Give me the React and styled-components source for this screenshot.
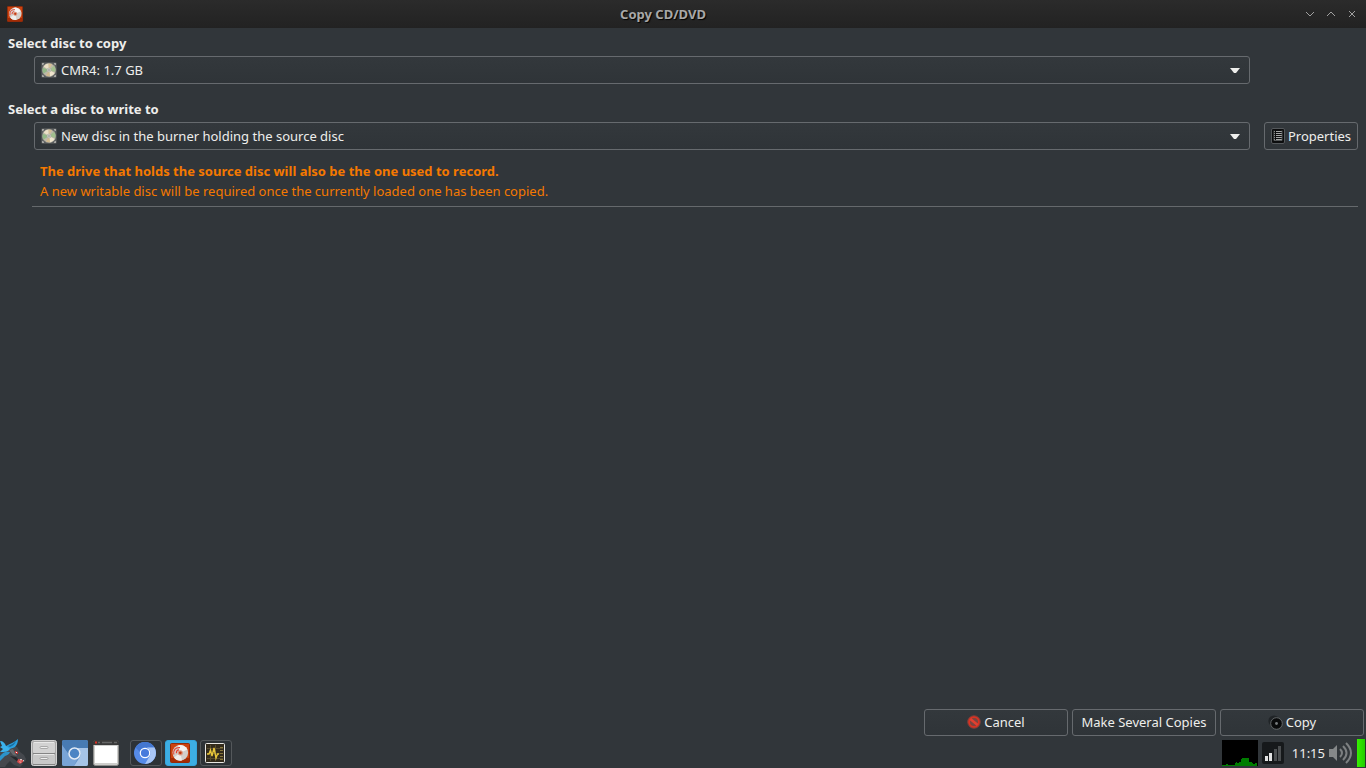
import React from "react";
import styled, { createGlobalStyle } from "styled-components";

const Global = createGlobalStyle`
  *, *::before, *::after { box-sizing: border-box; }
  body { margin: 0; background: #31363a; }
  body, button, select {
    font-family: "Noto Sans", "Open Sans", sans-serif;
    font-size: 13px;
    line-height: 20px;
    color: #eeeeec;
  }
`;

const Desktop = styled.div`
  display: flex;
  flex-direction: column;
  min-height: 100vh;
`;

const TitleBar = styled.header`
  display: grid;
  grid-template-columns: 1fr auto 1fr;
  align-items: center;
  height: 28px;
  padding: 0 9px 0 7px;
  background: linear-gradient(#2b2b2b, #222222);
`;

const Title = styled.h1`
  margin: 0;
  padding-right: 38px;
  font-size: 13px;
  line-height: 20px;
  font-weight: 700;
  color: #a8a8a8;
  text-shadow: 1px 1px 1px #000000;
`;

const WindowControls = styled.div`
  display: flex;
  justify-content: flex-end;
  gap: 11px;
`;

const WindowButton = styled.button`
  display: flex;
  align-items: center;
  justify-content: center;
  width: 10px;
  height: 20px;
  padding: 0;
  border: 0;
  background: none;
`;

const Content = styled.main`
  flex: 1;
  display: flex;
  flex-direction: column;
  gap: 15px;
  padding: 5px 8px 0;
`;

const Section = styled.section`
  display: flex;
  flex-direction: column;
  gap: 3px;
`;

const Heading = styled.label`
  font-weight: 700;
`;

const DriveRow = styled.div`
  display: grid;
  grid-template-columns: minmax(0, 1fr) 94px;
  gap: 14px;
  padding-left: 26px;
`;

const ComboBox = styled.div`
  display: grid;
  align-items: center;
  height: 28px;

  > * { grid-area: 1 / 1; }
`;

const Select = styled.select`
  appearance: none;
  width: 100%;
  height: 28px;
  padding: 0 32px 0 26px;
  border: 1px solid #666a6e;
  border-radius: 3px;
  background: linear-gradient(#33383c, #2f3438);
`;

const ComboIcon = styled.span`
  display: flex;
  z-index: 1;
  margin-left: 7px;
  pointer-events: none;
`;

const Caret = styled.svg`
  z-index: 1;
  justify-self: end;
  margin-right: 10px;
  pointer-events: none;
`;

const Warning = styled.div`
  margin: 8px 0 0 24px;
  padding: 0 8px 5px;
  border-bottom: 1px solid #65696c;
  color: #f57900;

  p { margin: 0; }
`;

const Button = styled.button`
  display: flex;
  align-items: center;
  justify-content: center;
  gap: 3px;
  height: ${(p) => (p.$tall ? 28 : 27)}px;
  padding: 0 0 ${(p) => (p.$tall ? 0 : 1)}px;
  border: 1px solid #666a6e;
  border-radius: 3px;
  background: linear-gradient(#33383c, #2f3438);
  white-space: nowrap;
`;

const Actions = styled.footer`
  display: grid;
  grid-template-columns: repeat(3, 144px);
  justify-content: end;
  gap: 4px;
  padding: 0 2px 2px;
`;

const Taskbar = styled.nav`
  display: flex;
  align-items: center;
  justify-content: space-between;
  height: 30px;
`;

const Group = styled.div`
  display: flex;
  align-items: center;
  gap: ${(p) => p.$gap}px;
`;

const Launcher = styled.button`
  display: flex;
  padding: 0;
  border: 0;
  background: none;
`;

const TaskButton = styled.button`
  display: flex;
  align-items: center;
  justify-content: center;
  width: 32px;
  height: 26px;
  padding: 0 2px 0 0;
  border: 1px solid ${(p) => (p.$active ? "#35a5dc" : "#54585b")};
  border-radius: 3px;
  background: ${(p) => (p.$active ? "#3daee3" : "#2d3236")};
`;

const Clock = styled.time`
  padding-left: 4px;
`;

const Battery = styled.div`
  width: 9px;
  height: 28px;
  border-right: 1px solid #26352a;
  background: linear-gradient(90deg, #35f000, #22cc00);
`;

function BurnerIcon({ size }) {
  return (
    <svg width={size} height={size} viewBox="0 0 20 20" aria-hidden="true">
      <rect x=".5" y=".5" width="19" height="19" rx="1" fill="#cc4310" stroke="#962b08" />
      <path d="M1 15h18v4H1z" fill="#a42c05" />
      <circle cx="10.3" cy="9.8" r="7.8" fill="#d3cfcb" />
      <path d="M10.3 9.8 8 2.4a7.8 7.8 0 0 1 9.5 4.2z" fill="#f5f3f2" />
      <path d="M10.3 9.8 12 17.4A7.8 7.8 0 0 1 4 14.4z" fill="#efedeb" />
      <path d="M3.8 11.5C3 7 5.6 4.2 10 4.6M6.4 10.2C6.2 8 7.4 7 9 6.9" fill="none" stroke="#e8402f" strokeWidth="1.2" />
      <circle cx="10.3" cy="9.8" r="2.6" fill="#dc9a84" />
      <circle cx="10.3" cy="9.8" r="1.4" fill="#c43b11" />
    </svg>
  );
}

function DiscIcon() {
  return (
    <svg width="16" height="16" viewBox="0 0 16 16" aria-hidden="true">
      <rect x=".5" y=".5" width="15" height="15" rx="1" fill="#5c5f60" stroke="#4b4f51" />
      <path d="M1 1h2v1L2 3H1zM15 1v2h-1l-1-1V1zM1 15v-2h1l1 1v1zM15 15h-2v-1l1-1h1z" fill="#a5a6a3" />
      <circle cx="8" cy="8" r="6.7" fill="#bdb8a8" stroke="#8c8d87" strokeWidth=".5" />
      <path d="M8 8 2.6 4.4A6.5 6.5 0 0 1 7.5 1.5z" fill="#e9dfc6" />
      <path d="M8 8 2.6 11.6A6.5 6.5 0 0 1 2 5.7z" fill="#92b886" />
      <path d="M8 8 7.5 1.5A6.5 6.5 0 0 1 11 2.3z" fill="#d6bf96" />
      <path d="M8 8l5-4.2a6.5 6.5 0 0 1 1.1 6.2z" fill="#a1bf8d" />
      <path d="M8 8l5.8 3a6.5 6.5 0 0 1-4.8 3.4z" fill="#eee5cd" />
      <path d="M8 8 5 13.8 9 14.4z" fill="#d0b98e" />
      <circle cx="8" cy="8" r="2" fill="#d5d5cd" stroke="#a3a49e" strokeWidth=".6" />
      <circle cx="8" cy="8" r=".8" fill="#858782" />
    </svg>
  );
}

function Combo({ id, text }) {
  return (
    <ComboBox>
      <Select id={id}>
        <option>{text}</option>
      </Select>
      <ComboIcon><DiscIcon /></ComboIcon>
      <Caret width="10" height="5" viewBox="0 0 10 5" aria-hidden="true">
        <path d="M0 0h10L6 5H4z" fill="#eeeeec" />
      </Caret>
    </ComboBox>
  );
}

function PropertiesIcon() {
  return (
    <svg width="14" height="16" viewBox="0 0 14 16" aria-hidden="true">
      <rect x=".5" y=".5" width="13" height="15" rx="1.5" fill="#0c0d0e" stroke="#54585b" />
      <path d="M3 3.5h1M5 3.5h6M3 5.5h1M5 5.5h6M3 7.5h1M5 7.5h6M3 9.5h1M5 9.5h6M3 11.5h1M5 11.5h6" stroke="#a5a6a6" />
      <path d="M3 2.5v10h8v-10" fill="none" stroke="#66696b" strokeWidth=".8" />
    </svg>
  );
}

function CancelIcon() {
  return (
    <svg width="14" height="14" viewBox="0 0 14 14" aria-hidden="true">
      <circle cx="7" cy="7" r="6.3" fill="#d83222" stroke="#75403d" />
      <circle cx="7" cy="7" r="4" fill="#7a4440" />
      <path d="m3.4 4 7.2 6" stroke="#e24030" strokeWidth="2.6" />
    </svg>
  );
}

function CopyIcon() {
  return (
    <svg width="15" height="15" viewBox="0 0 15 15" aria-hidden="true">
      <circle cx="6" cy="6" r="5.6" fill="#202427" />
      <circle cx="8.5" cy="8.5" r="5.8" fill="#090a0b" stroke="#6b6f71" strokeWidth=".9" />
      <circle cx="8.5" cy="8.5" r="1.4" fill="#777b7e" />
    </svg>
  );
}

function DragonIcon() {
  return (
    <svg width="26" height="28" viewBox="0 0 26 28" aria-hidden="true">
      <path d="M0 12 6 9l7-2 4 1 3 5 4 3 2 4-1 3-6-1 4 3-3 3-6-2-4-4-3 3-2 3H0z" fill="#45484d" />
      <path d="M5 8C8 5 12 5 18 0c0 3-1 6-3 8-3 2-6 1-8 4z" fill="#2b9fdd" />
      <path d="M0 2c3 0 5 2 6 5l4 3c-2 3-5 3-10 3l3-3-3-2 2-1z" fill="#3bb2ec" />
      <path d="M0 17c3-4 6-5 10-4-1 3-3 3-5 4l-5 5z" fill="#2c94cb" />
      <path d="M8 7c3-1 5-2 8-5-1 3-3 5-6 6z" fill="#1a6c9c" />
      <path d="m9 11 4-1 2 4 2 3-4-1z" fill="#66696d" />
      <path d="m15 12 3 1v2l-3-1z" fill="#dd3535" />
      <path d="m16 13 1 1" stroke="#ffffff" />
      <path d="m10 17 6 1 3 3-1 2z" fill="#25282c" />
      <path d="m18 20 5 1v2l-3 2-3-2z" fill="#d04a4b" />
      <path d="m19 22 3 1-2 1z" fill="#f4a09a" />
      <path d="m20 20 1 2 1-2zM23 21l1 2v-2z" fill="#f4eee9" />
    </svg>
  );
}

function CabinetIcon() {
  return (
    <svg width="26" height="26" viewBox="0 0 26 26" aria-hidden="true">
      <rect x=".5" y=".5" width="25" height="25" rx="2" fill="#a9a9a9" stroke="#d2d2d2" />
      <rect x="2" y="2" width="22" height="11" rx="1" fill="#d2d2d2" />
      <rect x="2" y="14" width="22" height="10" rx="1" fill="#c8c8c8" />
      <path d="M3 2.5h20M3 14.5h20" stroke="#e8e8e8" />
      <path d="M2 13.5h22M2 24.5h22" stroke="#858585" />
      <rect x="9" y="6.5" width="8" height="2" rx="1" fill="#eeeeee" stroke="#a9a9a9" />
      <rect x="9" y="17.5" width="8" height="2" rx="1" fill="#eeeeee" stroke="#a3a3a3" />
    </svg>
  );
}

function BrowserSquareIcon() {
  return (
    <svg width="26" height="26" viewBox="0 0 26 26" aria-hidden="true">
      <rect width="26" height="26" rx="2" fill="#6695cb" />
      <path d="M0 2q0-2 2-2h22q2 0 2 2v6H13q-5 1-6 7L0 5z" fill="#487bb3" />
      <path d="M0 5 8 16q2 3 7 3l-3 7H2q-2 0-2-2z" fill="#79a4d6" />
      <path d="M26 8H14q6 3 4 9l-6 9h12q2 0 2-2z" fill="#a6c4e7" />
      <circle cx="12.5" cy="13.5" r="6.2" fill="#e3ebf5" />
      <circle cx="12.5" cy="13.5" r="4.7" fill="#4b84c4" />
    </svg>
  );
}

function WindowIcon() {
  return (
    <svg width="26" height="26" viewBox="0 0 26 26" aria-hidden="true">
      <rect x=".5" y=".5" width="25" height="25" rx="2" fill="#cfcfcd" stroke="#8e8e8c" />
      <path d="M0 5V2q0-2 2-2h22q2 0 2 2v3z" fill="#393939" />
      <path d="M2 2.5h2" stroke="#e33124" strokeWidth="2" />
      <path d="M5 2.5h2M9 2.5h10M21 2.5h3" stroke="#666666" strokeWidth="1.5" />
      <path d="M2 6h22v17H2z" fill="#ffffff" />
    </svg>
  );
}

function BrowserRoundIcon() {
  return (
    <svg width="22" height="22" viewBox="0 0 22 22" aria-hidden="true">
      <circle cx="11" cy="11" r="11" fill="#568be8" />
      <path d="M1.5 5.5A11 11 0 0 1 20.5 5.5H11q-4 0-5.5 4z" fill="#4477d0" />
      <path d="M20.5 5.5A11 11 0 0 1 11 22l4.8-8.2q2-5-2.8-8.3z" fill="#a8c5f5" />
      <circle cx="11" cy="11" r="5.3" fill="#ffffff" />
      <circle cx="11" cy="11" r="4.1" fill="#487bdc" />
    </svg>
  );
}

function MonitorIcon() {
  return (
    <svg width="20" height="20" viewBox="0 0 20 20" aria-hidden="true">
      <rect x=".5" y=".5" width="19" height="19" rx="1" fill="#332b1c" stroke="#e9e8e3" />
      <path d="M2 5.5h16M2 10.5h16M2 15.5h16M5.5 2v16M10.5 2v16" stroke="#564b2e" />
      <path d="M2 11h2l1.5-4 1.5 6 2-8 2 10 1.5-4H14" fill="none" stroke="#e8c63a" strokeWidth="1.4" />
      <path d="M15 4.5h3M15 7.5h3M15 10.5h3M15 13.5h3M15 16.5h3" stroke="#86763a" />
    </svg>
  );
}

function CpuGraph() {
  return (
    <svg width="36" height="26" viewBox="0 0 36 26" aria-hidden="true">
      <path d="M0 0h36v26H0z" fill="#000000" />
      <path d="M0 26v-1h4v-1h2v1h7v-2h1v-1h1v1h2v-1h2v-3h1v-1h7v4h3v1h1v1h2v-1h2v3z" fill="#007d00" />
    </svg>
  );
}

function SignalIcon() {
  return (
    <svg width="22" height="22" viewBox="0 0 22 22" aria-hidden="true">
      <rect width="22" height="22" rx="2" fill="#16191b" />
      <path d="M3 14h3v5H3zM7 11h3v8H7z" fill="#e2e3e3" />
      <path d="M12 7h3v12h-3zM16 4h3v15h-3z" fill="#4b4e50" />
    </svg>
  );
}

function VolumeIcon() {
  return (
    <svg width="24" height="24" viewBox="0 0 24 24" aria-hidden="true">
      <path d="M0 8h4l4-4v16l-4-4H0z" fill="#858889" />
      <path d="M11 8q4 4 0 8M14 5q7 7 0 14M17 2q10 10 0 20" fill="none" stroke="#7d8082" strokeWidth="2" />
    </svg>
  );
}

const controls = [
  ["Minimize", "M1 3l4 4 4-4"],
  ["Maximize", "M1 7l4-4 4 4"],
  ["Close", "M2 2l6 6M8 2 2 8"],
];

export default function App() {
  return (
    <Desktop>
      <Global />
      <TitleBar>
        <BurnerIcon size={16} />
        <Title>Copy CD/DVD</Title>
        <WindowControls>
          {controls.map(([name, d]) => (
            <WindowButton key={name} type="button" aria-label={name}>
              <svg width="10" height="10" viewBox="0 0 10 10">
                <path d={d} fill="none" stroke="#a0a0a0" />
              </svg>
            </WindowButton>
          ))}
        </WindowControls>
      </TitleBar>

      <Content>
        <Section>
          <Heading htmlFor="source">Select disc to copy</Heading>
          <DriveRow>
            <Combo id="source" text="CMR4: 1.7 GB" />
          </DriveRow>
        </Section>
        <Section>
          <Heading htmlFor="target">Select a disc to write to</Heading>
          <DriveRow>
            <Combo id="target" text="New disc in the burner holding the source disc" />
            <Button type="button" $tall>
              <PropertiesIcon />
              Properties
            </Button>
          </DriveRow>
          <Warning>
            <p><strong>The drive that holds the source disc will also be the one used to record.</strong></p>
            <p>A new writable disc will be required once the currently loaded one has been copied.</p>
          </Warning>
        </Section>
      </Content>

      <Actions>
        <Button type="button"><CancelIcon />Cancel</Button>
        <Button type="button">Make Several Copies</Button>
        <Button type="button"><CopyIcon />Copy</Button>
      </Actions>

      <Taskbar>
        <Group $gap={11}>
          <Group $gap={5}>
            <Launcher type="button" aria-label="Menu"><DragonIcon /></Launcher>
            <Launcher type="button" aria-label="Files"><CabinetIcon /></Launcher>
            <Launcher type="button" aria-label="Browser"><BrowserSquareIcon /></Launcher>
            <Launcher type="button" aria-label="Show desktop"><WindowIcon /></Launcher>
          </Group>
          <Group $gap={3}>
            <TaskButton type="button" aria-label="Chromium"><BrowserRoundIcon /></TaskButton>
            <TaskButton type="button" aria-label="Disc burner" $active><BurnerIcon size={20} /></TaskButton>
            <TaskButton type="button" aria-label="Task manager"><MonitorIcon /></TaskButton>
          </Group>
        </Group>
        <Group $gap={4}>
          <CpuGraph />
          <SignalIcon />
          <Clock>11:15</Clock>
          <VolumeIcon />
          <Battery />
        </Group>
      </Taskbar>
    </Desktop>
  );
}
